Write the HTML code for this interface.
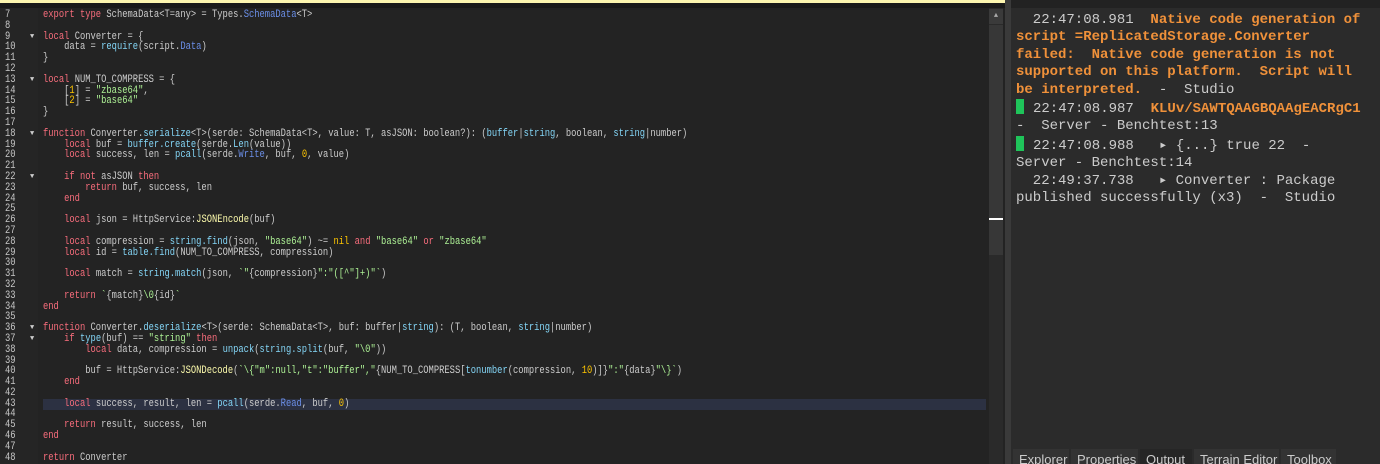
<!DOCTYPE html>
<html><head><style>
body{margin:0;width:1380px;height:464px;background:#232323;overflow:hidden;position:relative;font-family:"Liberation Mono",monospace}
#topbar{position:absolute;left:0;top:0;width:1005px;height:3px;background:#fdf6b0}
#strip{position:absolute;left:0;top:3px;width:1005px;height:5px;background:#1a1a1a}
#gutter{position:absolute;left:0;top:8px;width:38px;height:456px;background:#252525}
#hl{position:absolute;left:43px;top:399px;width:943px;height:11px;background:#2c3142}
#code{position:absolute;left:0;top:10px;width:988px}
.l{position:relative;height:10.8px;line-height:10.8px;font-size:11px;white-space:pre;color:#cccccc}
.n{position:absolute;left:5px;color:#c8c8c8;transform:scaleX(.8);transform-origin:left}
.f{position:absolute;left:30px;font-size:7px;color:#ccc}
.c{position:absolute;left:43px;transform:scaleX(.8);transform-origin:left}
.k{color:#f86d7c}.b{color:#84d6f7}.m{color:#6b8fe8}.s{color:#adf195}.o{color:#ffc600}.y{color:#fdfbac}
#sb{position:absolute;left:989px;top:8px;width:14px;height:456px;background:#2a2a2a}
#thumb{position:absolute;left:989px;top:25px;width:14px;height:230px;background:#373737}
#tick{position:absolute;left:989px;top:218px;width:14px;height:2px;background:#fff}
#up{position:absolute;left:989px;top:9px;width:14px;height:15px;background:#3a3a3a;color:#aaa;font-size:7px;text-align:center;line-height:15px}
#div{position:absolute;left:1005px;top:0;width:6px;height:464px;background:#3a3a3a}
#out{position:absolute;left:1011px;top:0;width:369px;height:464px;background:#2b2b2b}
#outtop{position:absolute;left:1011px;top:0;width:369px;height:8px;background:#222}
#log{position:absolute;left:1016px;top:12px;width:362px;font-size:14px;line-height:17.4px;color:#cccccc;white-space:pre}
.w{color:#f0913a;font-weight:bold}
.g{display:inline-block;width:8px;height:15px;background:#1fc45a;vertical-align:-2px;margin-right:9px}
#tabs{position:absolute;left:1011px;top:449px;width:369px;height:15px;background:#2b2b2b;font-family:"Liberation Sans",sans-serif;font-size:13px;color:#ccc}
.t{position:absolute;top:0;height:15px;background:#333;padding:3px 6px 0;box-sizing:border-box;line-height:15px;white-space:nowrap;overflow:hidden}
</style></head><body>
<div id="topbar"></div><div id="strip"></div><div id="gutter"></div><div id="hl"></div>
<div id="code">
<div class="l"><span class="n">7</span><span class="c"><span class="k">export type</span> SchemaData&lt;T=any&gt; = Types.<span class="m">SchemaData</span>&lt;T&gt;</span></div>
<div class="l"><span class="n">8</span></div>
<div class="l"><span class="n">9</span><span class="f">▼</span><span class="c"><span class="k">local</span> Converter = {</span></div>
<div class="l"><span class="n">10</span><span class="c">    data = <span class="b">require</span>(script.<span class="m">Data</span>)</span></div>
<div class="l"><span class="n">11</span><span class="c">}</span></div>
<div class="l"><span class="n">12</span></div>
<div class="l"><span class="n">13</span><span class="f">▼</span><span class="c"><span class="k">local</span> NUM_TO_COMPRESS = {</span></div>
<div class="l"><span class="n">14</span><span class="c">    [<span class="o">1</span>] = <span class="s">"zbase64"</span>,</span></div>
<div class="l"><span class="n">15</span><span class="c">    [<span class="o">2</span>] = <span class="s">"base64"</span></span></div>
<div class="l"><span class="n">16</span><span class="c">}</span></div>
<div class="l"><span class="n">17</span></div>
<div class="l"><span class="n">18</span><span class="f">▼</span><span class="c"><span class="k">function</span> Converter.<span class="b">serialize</span>&lt;T&gt;(serde: SchemaData&lt;T&gt;, value: T, asJSON: boolean?): (<span class="b">buffer</span>|<span class="b">string</span>, boolean, <span class="b">string</span>|number)</span></div>
<div class="l"><span class="n">19</span><span class="c">    <span class="k">local</span> buf = <span class="b">buffer.create</span>(serde.<span class="b">Len</span>(value))</span></div>
<div class="l"><span class="n">20</span><span class="c">    <span class="k">local</span> success, len = <span class="b">pcall</span>(serde.<span class="m">Write</span>, buf, <span class="o">0</span>, value)</span></div>
<div class="l"><span class="n">21</span></div>
<div class="l"><span class="n">22</span><span class="f">▼</span><span class="c">    <span class="k">if not</span> asJSON <span class="k">then</span></span></div>
<div class="l"><span class="n">23</span><span class="c">        <span class="k">return</span> buf, success, len</span></div>
<div class="l"><span class="n">24</span><span class="c">    <span class="k">end</span></span></div>
<div class="l"><span class="n">25</span></div>
<div class="l"><span class="n">26</span><span class="c">    <span class="k">local</span> json = HttpService:<span class="y">JSONEncode</span>(buf)</span></div>
<div class="l"><span class="n">27</span></div>
<div class="l"><span class="n">28</span><span class="c">    <span class="k">local</span> compression = <span class="b">string.find</span>(json, <span class="s">"base64"</span>) ~= <span class="o">nil</span> <span class="k">and</span> <span class="s">"base64"</span> <span class="k">or</span> <span class="s">"zbase64"</span></span></div>
<div class="l"><span class="n">29</span><span class="c">    <span class="k">local</span> id = <span class="b">table.find</span>(NUM_TO_COMPRESS, compression)</span></div>
<div class="l"><span class="n">30</span></div>
<div class="l"><span class="n">31</span><span class="c">    <span class="k">local</span> match = <span class="b">string.match</span>(json, <span class="s">`"</span>{compression}<span class="s">":"([^"]+)"`</span>)</span></div>
<div class="l"><span class="n">32</span></div>
<div class="l"><span class="n">33</span><span class="c">    <span class="k">return</span> <span class="s">`</span>{match}<span class="s">\0</span>{id}<span class="s">`</span></span></div>
<div class="l"><span class="n">34</span><span class="c"><span class="k">end</span></span></div>
<div class="l"><span class="n">35</span></div>
<div class="l"><span class="n">36</span><span class="f">▼</span><span class="c"><span class="k">function</span> Converter.<span class="b">deserialize</span>&lt;T&gt;(serde: SchemaData&lt;T&gt;, buf: buffer|<span class="b">string</span>): (T, boolean, <span class="b">string</span>|number)</span></div>
<div class="l"><span class="n">37</span><span class="f">▼</span><span class="c">    <span class="k">if</span> <span class="b">type</span>(buf) == <span class="s">"string"</span> <span class="k">then</span></span></div>
<div class="l"><span class="n">38</span><span class="c">        <span class="k">local</span> data, compression = <span class="b">unpack</span>(<span class="b">string.split</span>(buf, <span class="s">"\0"</span>))</span></div>
<div class="l"><span class="n">39</span></div>
<div class="l"><span class="n">40</span><span class="c">        buf = HttpService:<span class="y">JSONDecode</span>(<span class="s">`\{"m":null,"t":"buffer","</span>{NUM_TO_COMPRESS[<span class="b">tonumber</span>(compression, <span class="o">10</span>)]}<span class="s">":"</span>{data}<span class="s">"\}`</span>)</span></div>
<div class="l"><span class="n">41</span><span class="c">    <span class="k">end</span></span></div>
<div class="l"><span class="n">42</span></div>
<div class="l"><span class="n">43</span><span class="c">    <span class="k">local</span> success, result, len = <span class="b">pcall</span>(serde.<span class="m">Read</span>, buf, <span class="o">0</span>)</span></div>
<div class="l"><span class="n">44</span></div>
<div class="l"><span class="n">45</span><span class="c">    <span class="k">return</span> result, success, len</span></div>
<div class="l"><span class="n">46</span><span class="c"><span class="k">end</span></span></div>
<div class="l"><span class="n">47</span></div>
<div class="l"><span class="n">48</span><span class="c"><span class="k">return</span> Converter</span></div>
</div>
<div id="sb"></div><div id="thumb"></div><div id="tick"></div><div id="up">▲</div>
<div id="div"></div>
<div id="out"></div><div id="outtop"></div>
<div id="log">  22:47:08.981  <span class="w">Native code generation of
script =ReplicatedStorage.Converter
failed:  Native code generation is not
supported on this platform.  Script will
be interpreted.</span>  -  Studio
<span class="g"></span>22:47:08.987  <span class="w">KLUv/SAWTQAAGBQAAgEACRgC1</span>
-  Server - Benchtest:13
<span class="g"></span>22:47:08.988   ▸ {...} true 22  -
Server - Benchtest:14
  22:49:37.738   ▸ Converter : Package
published successfully (x3)  -  Studio</div>
<div id="tabs">
<div class="t" style="left:2px;width:56px">Explorer</div>
<div class="t" style="left:60px;width:67px">Properties</div>
<div class="t" style="left:129px;width:52px;background:#262626">Output</div>
<div class="t" style="left:183px;width:85px">Terrain Editor</div>
<div class="t" style="left:270px;width:55px">Toolbox</div>
</div>
</body></html>
